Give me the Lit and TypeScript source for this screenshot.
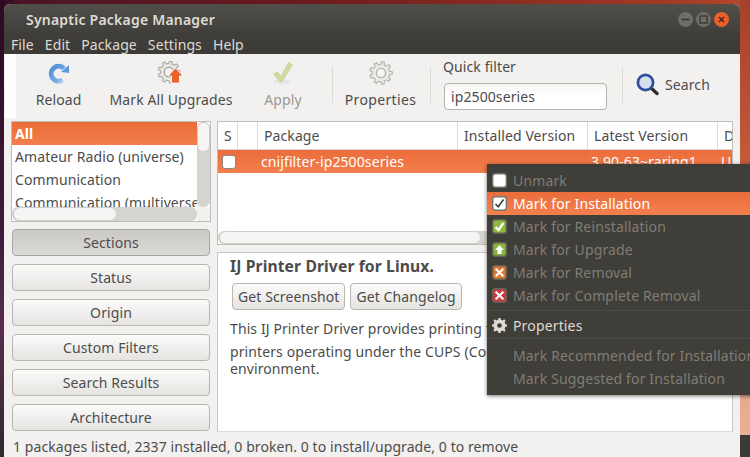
import { LitElement, html, css } from 'lit';
import { customElement } from 'lit/decorators.js';
import { classMap } from 'lit/directives/class-map.js';

// builds a cog outline, teeth count and radii in svg units
function gearPath(cx: number, cy: number, outer: number, inner: number, teeth: number) {
  const pts: string[] = [];
  const step = (Math.PI * 2) / teeth;
  for (let i = 0; i < teeth; i++) {
    const a = i * step;
    const list: [number, number][] = [
      [inner, a - step * 0.5],
      [inner, a - step * 0.28],
      [outer, a - step * 0.17],
      [outer, a + step * 0.17],
      [inner, a + step * 0.28],
    ];
    for (const [r, t] of list) {
      pts.push(`${(cx + r * Math.cos(t)).toFixed(2)} ${(cy + r * Math.sin(t)).toFixed(2)}`);
    }
  }
  return 'M' + pts.join('L') + 'Z';
}

const columns = [
  { name: 'S', width: 20 },
  { name: '', width: 20 },
  { name: 'Package', width: 200 },
  { name: 'Installed Version', width: 130 },
  { name: 'Latest Version', width: 130 },
  { name: 'D', width: 15 },
];

const sections = ['All', 'Amateur Radio (universe)', 'Communication', 'Communication (multiverse)'];
const filters = ['Sections', 'Status', 'Origin', 'Custom Filters', 'Search Results', 'Architecture'];

@customElement('app-root')
export class AppRoot extends LitElement {
  static styles = css`
    :host {
      display: block;
      position: relative;
      width: 750px;
      height: 457px;
      overflow: hidden;
      font-family: 'Noto Sans', sans-serif;
      font-size: 14px;
      letter-spacing: 0.1px;
      color: #4c4c4c;
      background:
        linear-gradient(180deg, transparent 0, transparent 435px, #3b3a36 435px),
        linear-gradient(90deg, #2c0a20 0, #4a1526 3%, #6b1a1e 40%, #a53a24 90%, #b4492d 100%);
    }
    .wall-right {
      position: absolute;
      right: 0;
      top: 0;
      width: 10px;
      height: 435px;
      background: linear-gradient(180deg, #a5402a 0, #c9603f 45%, #e8a88c 90%, #eab094 100%);
    }
    .wall-left {
      position: absolute;
      left: 0;
      top: 0;
      width: 4px;
      height: 457px;
      background: linear-gradient(180deg, #2c0a20 0, #3f1a38 50%, #5a2c4e 72%, #2e2a2e 100%);
    }
    .window {
      position: relative;
      margin: 4px 0 0 4px;
      width: 736px;
      height: 453px;
      display: flex;
      flex-direction: column;
      background: #f2f1f0;
      border-radius: 6px 6px 0 0;
      overflow: hidden;
    }
    .header {
      height: 50px;
      flex: none;
      background: linear-gradient(180deg, #504f4a 0, #3f3e3a 60%, #3c3b37 100%);
      color: #dfdbd2;
    }
    .titlebar {
      height: 30px;
      display: flex;
      align-items: center;
      padding-left: 22px;
      position: relative;
    }
    .title {
      font-weight: 600;
      font-size: 14px;
      letter-spacing: 0.22px;
    }
    .wm {
      margin-left: auto;
      margin-right: 11px;
      display: flex;
      gap: 3px;
    }
    .wm svg {
      display: block;
    }
    .menubar {
      height: 20px;
      display: flex;
      align-items: center;
      padding-left: 7px;
      gap: 11px;
      font-size: 14px;
    }
    .toolbar {
      height: 64px;
      flex: none;
      display: flex;
      padding-left: 12px;
      background-color: #f2f1f0;
    }
    .grip {
      position: absolute;
      left: 1px;
      top: 50px;
      width: 11px;
      height: 64px;
      background-image: radial-gradient(#ffffff 0.7px, transparent 0.8px);
      background-size: 2px 2px;
    }
    .tool {
      display: flex;
      flex-direction: column;
      align-items: center;
      padding-top: 7px;
      box-sizing: border-box;
      flex: none;
    }
    .tool svg {
      display: block;
      height: 24px;
    }
    .tool span {
      margin-top: 5px;
      line-height: 20px;
      white-space: nowrap;
    }
    .tool.disabled span {
      color: #9a9996;
    }
    .reload {
      width: 85px;
    }
    .upgrades {
      width: 140px;
    }
    .apply {
      width: 84px;
      margin-right: 7px;
    }
    .properties {
      width: 97px;
      padding-right: 2px;
    }
    .properties span {
      letter-spacing: 0.35px;
    }
    .sep {
      width: 1px;
      height: 36px;
      margin-top: 13px;
      background: #dcdad6;
      flex: none;
    }
    .quick {
      width: 191px;
      padding: 3px 0 0 12px;
      box-sizing: border-box;
    }
    .quick label {
      display: block;
      line-height: 20px;
      height: 26px;
    }
    .entry {
      width: 163px;
      height: 27px;
      margin-left: 1px;
      box-sizing: border-box;
      border: 1px solid #b5b3ae;
      border-radius: 4px;
      background: linear-gradient(180deg, #f4f3f2 0, #ffffff 40%);
      padding-left: 6px;
      line-height: 25px;
    }
    .search {
      display: flex;
      align-items: center;
      gap: 6px;
      padding: 0 0 0 13px;
      height: 60px;
    }
    .main {
      flex: 1;
      display: flex;
      gap: 6px;
      padding: 3px 7px 0;
      min-height: 0;
    }
    .left {
      width: 200px;
      flex: none;
      display: flex;
      flex-direction: column;
    }
    .list {
      height: 101px;
      box-sizing: border-box;
      border: 1px solid #bfbdb8;
      background: #fff;
      display: grid;
      grid-template-columns: 185px 13px;
      grid-template-rows: 85px 14px;
      margin-bottom: 7px;
    }
    .list-items {
      overflow: hidden;
    }
    .list-item {
      height: 23px;
      line-height: 23px;
      padding-left: 3px;
      white-space: nowrap;
    }
    .selected {
      background: linear-gradient(180deg, #ea6d3a 0, #f47e4d 100%);
      color: #fff;
    }
    .list-item.selected {
      font-weight: 700;
    }
    .vtrack {
      background: #d6d4d0;
      border-radius: 6px;
      position: relative;
    }
    .vthumb {
      position: absolute;
      top: 0;
      left: 0;
      right: 0;
      height: 30px;
      background: #f6f5f4;
      border: 1px solid #cfcdc9;
      border-radius: 6px;
      box-sizing: border-box;
    }
    .htrack {
      background: #d6d4d0;
      border-radius: 6px;
      position: relative;
    }
    .hthumb {
      position: absolute;
      top: 0;
      bottom: 0;
      left: 1px;
      background: #f6f5f4;
      border: 1px solid #cfcdc9;
      border-radius: 7px;
      box-sizing: border-box;
    }
    .corner {
      background: #f2f1f0;
    }
    .filters {
      display: flex;
      flex-direction: column;
      gap: 8px;
      padding: 0 1px;
    }
    .btn {
      height: 27px;
      box-sizing: border-box;
      border: 1px solid #b8b6b1;
      border-radius: 4px;
      background: linear-gradient(180deg, #fbfbfa 0, #eeedeb 60%, #e6e4e1 100%);
      display: flex;
      align-items: center;
      justify-content: center;
      white-space: nowrap;
    }
    .btn.active {
      background: linear-gradient(180deg, #cbc9c5 0, #dcdad7 100%);
      border-color: #a9a7a2;
    }
    .right {
      width: 516px;
      flex: none;
      display: flex;
      flex-direction: column;
      gap: 7px;
    }
    .table {
      height: 124px;
      flex: none;
      box-sizing: border-box;
      border: 1px solid #c0beb9;
      background: #fff;
      display: flex;
      flex-direction: column;
      overflow: hidden;
    }
    .thead {
      display: flex;
      height: 28px;
      flex: none;
      box-sizing: border-box;
      border-bottom: 1px solid #d8d6d2;
    }
    .th {
      box-sizing: border-box;
      border-right: 1px solid #dcdad6;
      padding-left: 6px;
      line-height: 27px;
      white-space: nowrap;
      flex: none;
      overflow: hidden;
    }
    .row {
      height: 23px;
      flex: none;
      position: relative;
      display: flex;
      align-items: center;
      padding-left: 4px;
    }
    .check {
      width: 14px;
      height: 14px;
      box-sizing: border-box;
      background: #fff;
      border: 1px solid #8d8b87;
      border-radius: 3px;
      flex: none;
    }
    .pkg {
      margin-left: 25px;
      width: 330px;
      flex: none;
      white-space: nowrap;
    }
    .ver {
      width: 130px;
      flex: none;
      white-space: nowrap;
    }
    .spacer {
      flex: 1;
    }
    .table .htrack {
      height: 13px;
      flex: none;
    }
    .detail {
      flex: 1;
      min-height: 0;
      box-sizing: border-box;
      border: 1px solid #c9c7c2;
      border-bottom-color: #dedcd8;
      background: #fff;
      padding: 1px 0 0 12px;
      overflow: hidden;
      white-space: nowrap;
    }
    .detail h1 {
      margin: 0;
      font-size: 15.7px;
      font-weight: 700;
      line-height: 24px;
    }
    .actions {
      display: flex;
      gap: 5px;
      margin: 5px 0 10px 2px;
    }
    .actions .btn {
      padding: 0 5px;
    }
    .detail p {
      margin: 0;
      line-height: 17px;
    }
    .detail p.first {
      margin-bottom: 5px;
      line-height: 18px;
    }
    .status {
      flex: none;
      height: 25px;
      line-height: 29px;
      padding-left: 9px;
      white-space: nowrap;
      letter-spacing: 0.08px;
    }
    .menu {
      position: absolute;
      left: 487px;
      top: 164px;
      width: 270px;
      height: 231px;
      box-sizing: border-box;
      padding: 5px 0 4px;
      background: #403e38;
      box-shadow: 0 1px 4px rgba(0, 0, 0, 0.55);
      color: #7f7d76;
      letter-spacing: 0.15px;
    }
    .mi {
      height: 23px;
      display: flex;
      align-items: center;
      padding-left: 5px;
      gap: 6px;
      white-space: nowrap;
    }
    .mi svg {
      display: block;
      flex: none;
    }
    .mi.plain {
      padding-left: 26px;
    }
    .mi.enabled {
      color: #dfdbd2;
    }
    .mi.on {
      background: linear-gradient(180deg, #ea6d3a 0, #f4804f 100%);
      color: #fff;
    }
    .msep {
      height: 1px;
      background: #4d4b45;
      margin: 3px 0;
    }
    .msep.b {
      margin: 1px 0 5px;
    }
  `;

  renderMenuBox(fill: string, glyph: string) {
    const mark =
      glyph === 'check' ? html`<svg width="15" height="15" viewBox="0 0 15 15"><rect x="0.7" y="0.7" width="13.6" height="13.6" rx="2.5" fill="${fill}" stroke="#65635d" stroke-width="1.4"/><path d="M3.5 8 L6.5 11 L11.5 4" fill="none" stroke="#fff" stroke-width="2.2"/></svg>`
      : glyph === 'up' ? html`<svg width="15" height="15" viewBox="0 0 15 15"><rect x="0.7" y="0.7" width="13.6" height="13.6" rx="2.5" fill="${fill}" stroke="#65635d" stroke-width="1.4"/><path d="M7.5 3 L12 8 H9.5 V12 H5.5 V8 H3Z" fill="#fff"/></svg>`
      : html`<svg width="15" height="15" viewBox="0 0 15 15"><rect x="0.7" y="0.7" width="13.6" height="13.6" rx="2.5" fill="${fill}" stroke="#65635d" stroke-width="1.4"/><path d="M3.7 3.7 L11.3 11.3 M11.3 3.7 L3.7 11.3" fill="none" stroke="#fff" stroke-width="2"/></svg>`;
    return mark;
  }

  render() {
    return html`
      <div class="wall-left"></div>
      <div class="wall-right"></div>
      <div class="window">
        <div class="header">
          <div class="titlebar">
            <span class="title">Synaptic Package Manager</span>
            <div class="wm">
              <svg width="15" height="15" viewBox="0 0 15 15"><circle cx="7.5" cy="7.5" r="7.5" fill="#6e6d68"/><path d="M3.5 7.5h8" stroke="#35342f" stroke-width="1.6"/></svg>
              <svg width="15" height="15" viewBox="0 0 15 15"><circle cx="7.5" cy="7.5" r="7.5" fill="#6e6d68"/><rect x="4" y="4" width="7" height="7" fill="none" stroke="#35342f" stroke-width="1.3"/></svg>
              <svg width="15" height="15" viewBox="0 0 15 15"><circle cx="7.5" cy="7.5" r="7.5" fill="#e9602b"/><path d="M5 5l5 5M10 5l-5 5" stroke="#4a2416" stroke-width="1.5"/></svg>
            </div>
          </div>
          <div class="menubar">
            <span>File</span><span>Edit</span><span>Package</span><span>Settings</span><span>Help</span>
          </div>
        </div>

        <div class="toolbar">
          <div class="grip"></div>
          <div class="tool reload">
            <svg width="24" height="24" viewBox="0 0 24 24">
              <defs><linearGradient id="rl" gradientUnits="userSpaceOnUse" x1="4" y1="4" x2="19" y2="22"><stop offset="0" stop-color="#4f8ad6"/><stop offset="0.7" stop-color="#79aee6"/><stop offset="1" stop-color="#e6eff8"/></linearGradient></defs>
              <path d="M17 7.5 A7.5 7.5 0 1 0 15.8 19.1" fill="none" stroke="url(#rl)" stroke-width="5"/>
              <path d="M22 4 L22 12 L14 11Z" fill="#5f98dc"/>
            </svg>
            <span>Reload</span>
          </div>
          <div class="tool upgrades">
            <svg width="26" height="24" viewBox="0 0 26 24">
              <path d="${gearPath(11, 11, 11, 8.5, 9)}" fill="#eceae7" stroke="#a9a7a3" stroke-width="1.1"/>
              <circle cx="11" cy="11" r="4.8" fill="#f6f5f3" stroke="#a9a7a3" stroke-width="1.4"/>
              <path d="M17.5 7 L25 15 H21.5 V22 H13.5 V15 H10Z" fill="#e8632c" stroke="#fff" stroke-width="0.8"/>
            </svg>
            <span>Mark All Upgrades</span>
          </div>
          <div class="tool apply disabled">
            <svg width="24" height="24" viewBox="0 0 24 24">
              <ellipse cx="11" cy="21" rx="9" ry="2.5" fill="#e6e5e1"/>
              <path d="M2.5 13 L6.5 11 L10 16 L17.5 1.5 L21.5 4 L11 20.5 L8.5 20.5Z" fill="#cfdca0" stroke="#bccb8a" stroke-width="0.7"/>
            </svg>
            <span>Apply</span>
          </div>
          <div class="sep"></div>
          <div class="tool properties">
            <svg width="24" height="24" viewBox="0 0 24 24">
              <path d="${gearPath(12, 12, 11.3, 8.8, 9)}" fill="#eceae7" stroke="#b3b1ad" stroke-width="1.1"/>
              <circle cx="12" cy="12" r="4.6" fill="#f6f5f3" stroke="#b3b1ad" stroke-width="1.3"/>
            </svg>
            <span>Properties</span>
          </div>
          <div class="sep"></div>
          <div class="quick">
            <label>Quick filter</label>
            <div class="entry">ip2500series</div>
          </div>
          <div class="sep"></div>
          <div class="search">
            <svg width="23" height="23" viewBox="0 0 23 23">
              <path d="M14 14 L21 20.5" stroke="#2f2f2f" stroke-width="3.4" stroke-linecap="round"/>
              <circle cx="9.5" cy="9.5" r="7.6" fill="#d5deef" stroke="#2f4e9c" stroke-width="2.8"/>
            </svg>
            <span>Search</span>
          </div>
        </div>

        <div class="main">
          <div class="left">
            <div class="list">
              <div class="list-items">
                ${sections.map((s, i) => html`<div class=${classMap({ 'list-item': true, selected: i === 0 })}>${s}</div>`)}
              </div>
              <div class="vtrack"><div class="vthumb"></div></div>
              <div class="htrack"><div class="hthumb" style="width:104px"></div></div>
              <div class="corner"></div>
            </div>
            <div class="filters">
              ${filters.map((f, i) => html`<div class=${classMap({ btn: true, active: i === 0 })}>${f}</div>`)}
            </div>
          </div>

          <div class="right">
            <div class="table">
              <div class="thead">
                ${columns.map(c => html`<div class="th" style="width:${c.width}px">${c.name}</div>`)}
              </div>
              <div class="row selected">
                <div class="check"></div>
                <div class="pkg">cnijfilter-ip2500series</div>
                <div class="ver">3.90-63~raring1</div>
                <div>U</div>
              </div>
              <div class="spacer"></div>
              <div class="htrack"><div class="hthumb" style="width:262px"></div></div>
            </div>
            <div class="detail">
              <h1>IJ Printer Driver for Linux.</h1>
              <div class="actions">
                <div class="btn">Get Screenshot</div>
                <div class="btn">Get Changelog</div>
              </div>
              <p class="first">This IJ Printer Driver provides printing functions for Canon Inkjet</p>
              <p>printers operating under the CUPS (Common UNIX Printing System)</p>
              <p>environment.</p>
            </div>
          </div>
        </div>

        <div class="status">1 packages listed, 2337 installed, 0 broken. 0 to install/upgrade, 0 to remove</div>
      </div>

      <div class="menu">
        <div class="mi">
          <svg width="15" height="15" viewBox="0 0 15 15"><rect x="0.7" y="0.7" width="13.6" height="13.6" rx="2.5" fill="#fff" stroke="#77756f" stroke-width="1.4"/></svg>
          Unmark
        </div>
        <div class="mi on enabled">
          <svg width="15" height="15" viewBox="0 0 15 15"><rect x="0.7" y="0.7" width="13.6" height="13.6" rx="2.5" fill="#fff" stroke="#77756f" stroke-width="1.4"/><path d="M3.5 8 L6.2 10.8 L11.5 3.5" fill="none" stroke="#3c3b37" stroke-width="1.6"/></svg>
          Mark for Installation
        </div>
        <div class="mi">${this.renderMenuBox('#8fb83f', 'check')} Mark for Reinstallation</div>
        <div class="mi">${this.renderMenuBox('#86b53a', 'up')} Mark for Upgrade</div>
        <div class="mi">${this.renderMenuBox('#e5762e', 'x')} Mark for Removal</div>
        <div class="mi">${this.renderMenuBox('#cf3a3a', 'x')} Mark for Complete Removal</div>
        <div class="msep"></div>
        <div class="mi enabled">
          <svg width="15" height="15" viewBox="0 0 15 15"><path fill-rule="evenodd" d="${gearPath(7.5, 7.5, 7.8, 6, 8)} M7.5 5.2a2.3 2.3 0 1 0 0.01 0Z" fill="#dfdbd2"/></svg>
          Properties
        </div>
        <div class="msep b"></div>
        <div class="mi plain">Mark Recommended for Installation</div>
        <div class="mi plain">Mark Suggested for Installation</div>
      </div>
    `;
  }
}
